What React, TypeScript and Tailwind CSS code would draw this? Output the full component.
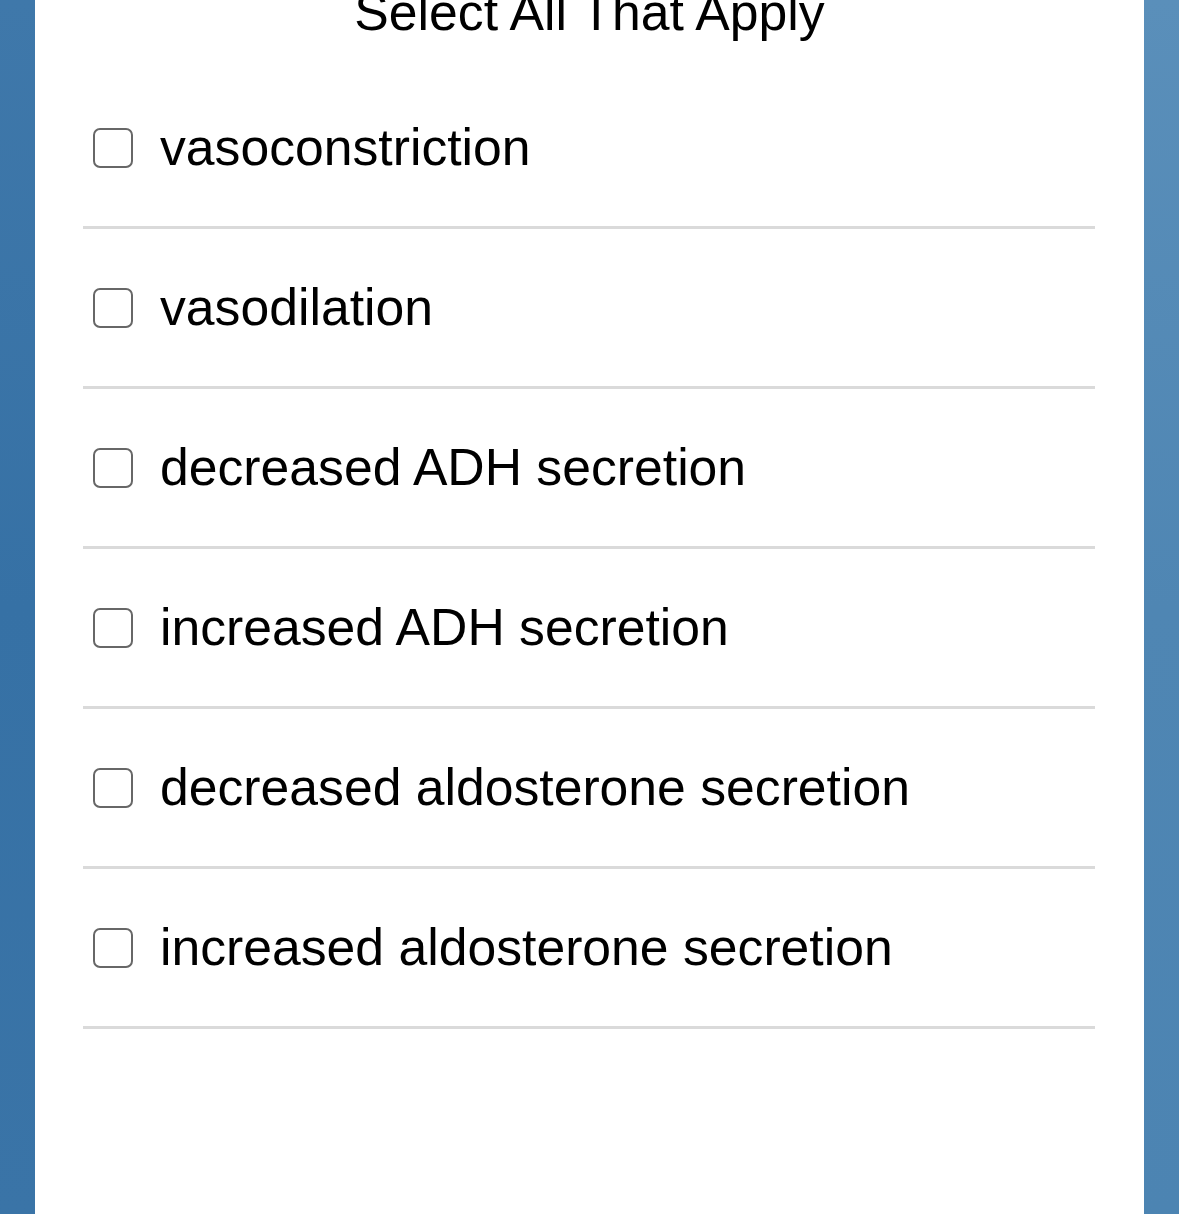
import React from 'react';

const options = [
  'vasoconstriction',
  'vasodilation',
  'decreased ADH secretion',
  'increased ADH secretion',
  'decreased aldosterone secretion',
  'increased aldosterone secretion',
];

const OptionRow: React.FC<{ label: string }> = ({ label }) => (
  <label className="flex h-[160px] items-center border-b-[3px] border-[#dadada]">
    <span className="ml-[10px] h-[40px] w-[40px] shrink-0 rounded-[7px] border-2 border-[#676767] bg-white" />
    <span className="ml-[27px] text-[51.7px] leading-none text-black">{label}</span>
  </label>
);

export default function App() {
  return (
    <div
      className="flex h-[1214px] w-full overflow-hidden bg-gradient-to-r from-[#3a73a6] to-[#5088b5]"
      style={{ fontFamily: '"Liberation Sans", Arial, sans-serif' }}
    >
      <div className="w-[35px] shrink-0 bg-gradient-to-b from-[#3f78aa] via-[#3671a5] to-[#3a74a7]" />
      <div className="flex flex-1 flex-col bg-white">
        <div className="h-[69px]">
          <p className="-mt-[13px] text-center text-[51.7px] leading-none text-black">Select All That Apply</p>
        </div>
        <div className="ml-[48px] mr-[49px] flex flex-col">
          {options.map((o) => (
            <OptionRow key={o} label={o} />
          ))}
        </div>
      </div>
      <div className="w-[35px] shrink-0 bg-gradient-to-b from-[#5a8fba] via-[#4f86b3] to-[#4c84b2]" />
    </div>
  );
}
